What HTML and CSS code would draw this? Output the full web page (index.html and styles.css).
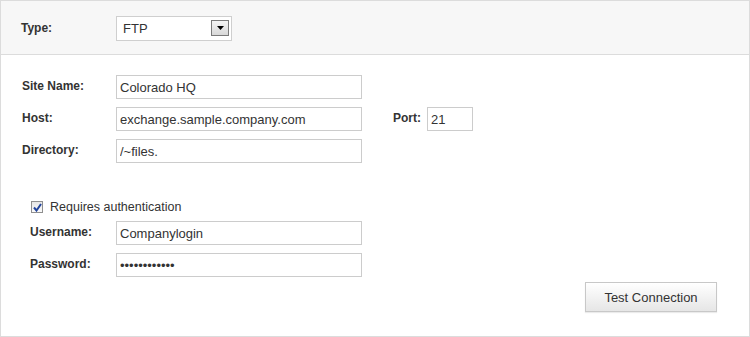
FILE: index.html
```html
<!DOCTYPE html>
<html>
<head>
<meta charset="utf-8">
<link rel="stylesheet" href="styles.css">
</head>
<body>
<div class="panel">
  <div class="header">
    <span class="label type-label">Type:</span>
    <div class="select">
      <span class="select-text">FTP</span>
      <span class="select-btn"><svg width="7" height="4" viewBox="0 0 7 4"><path d="M0 0H7L3.5 4Z" fill="#000"/></svg></span>
    </div>
  </div>
  <div class="main">
    <div class="row">
      <span class="label">Site Name:</span>
      <input class="field" type="text" value="Colorado HQ">
    </div>
    <div class="row">
      <span class="label">Host:</span>
      <input class="field" type="text" value="exchange.sample.company.com">
      <span class="label port-label">Port:</span>
      <input class="field port" type="text" value="21">
    </div>
    <div class="row">
      <span class="label">Directory:</span>
      <input class="field" type="text" value="/~files.">
    </div>
    <div class="auth">
      <div class="check-row">
        <span class="checkbox"><svg width="9" height="9" viewBox="0 0 9 9"><path d="M1 4.5L3.5 7.5L8 1" fill="none" stroke="#22449c" stroke-width="2"/></svg></span>
        <span class="check-text">Requires authentication</span>
      </div>
      <div class="row">
        <span class="label auth-label">Username:</span>
        <input class="field" type="text" value="Companylogin">
      </div>
      <div class="row">
        <span class="label auth-label">Password:</span>
        <input class="field pw" type="text" value="••••••••••••">
      </div>
    </div>
    <div class="actions">
      <button class="btn" type="button">Test Connection</button>
    </div>
  </div>
</div>
</body>
</html>
```
FILE: styles.css
```css
* { box-sizing: border-box; }
html, body { margin: 0; padding: 0; background: #fff; }
body { font-family: "Liberation Sans", Arial, sans-serif; color: #333; }
.panel {
  width: 750px;
  height: 337px;
  border: 1px solid #dcdcdc;
  background: #fff;
}
.header {
  height: 54px;
  background: #f7f7f7;
  border-bottom: 1px solid #dcdcdc;
  display: flex;
  align-items: center;
  padding-left: 20px;
  padding-top: 1px;
}
.label {
  font-size: 12px;
  font-weight: bold;
  color: #333;
}
.type-label { width: 95px; }
.select {
  width: 116px;
  height: 25px;
  border: 1px solid #cfcfcf;
  background: #fff;
  display: flex;
  align-items: center;
  justify-content: space-between;
  padding-left: 6px;
  padding-right: 2px;
}
.select-text { font-size: 13px; color: #333; }
.select-btn {
  width: 18px;
  height: 16px;
  border: 1px solid #7a7a7a;
  background: linear-gradient(#f4f4f4, #d8d8d8);
  display: flex;
  align-items: center;
  justify-content: center;
}
.select-btn svg { display: block; }
.main {
  padding: 20px 0 0 21px;
}
.row {
  display: flex;
  align-items: center;
  height: 24px;
  margin-bottom: 8px;
}
.row .label { width: 94px; margin-top: -2px; }
.field {
  width: 246px;
  height: 24px;
  border: 1px solid #cccccc;
  padding: 0 3px;
  margin: 0;
  font-family: "Liberation Sans", Arial, sans-serif;
  font-size: 13px;
  color: #333;
  background: #fff;
  outline: none;
}
.row .port-label { width: auto; margin-left: 31px; margin-right: 6px; }
.field.port { width: 46px; }
.field.pw { font-size: 13px; letter-spacing: 0; }
.auth {
  padding-left: 8px;
  margin-top: 35px;
}
.check-row {
  display: flex;
  align-items: center;
  height: 18px;
  margin-bottom: 5px;
}
.checkbox {
  width: 12px;
  height: 12px;
  border: 1px solid #8f8f8f;
  background: linear-gradient(#e6e6e6, #fafafa);
  display: flex;
  align-items: center;
  justify-content: center;
  margin-left: 1px;
  margin-right: 7px;
}
.checkbox svg { display: block; }
.check-text { font-size: 12.5px; color: #333; }
.auth .row .label { width: 86px; }
.actions {
  display: flex;
  justify-content: flex-end;
  padding-right: 32px;
  margin-top: -3px;
}
.btn {
  width: 132px;
  height: 30px;
  border: 1px solid #c8c8c8;
  background: linear-gradient(#ffffff, #e6e6e6);
  font-family: "Liberation Sans", Arial, sans-serif;
  font-size: 13px;
  color: #333;
  padding: 0;
  margin: 0;
  box-shadow: 0 1px 1px rgba(0,0,0,0.08);
}
```
